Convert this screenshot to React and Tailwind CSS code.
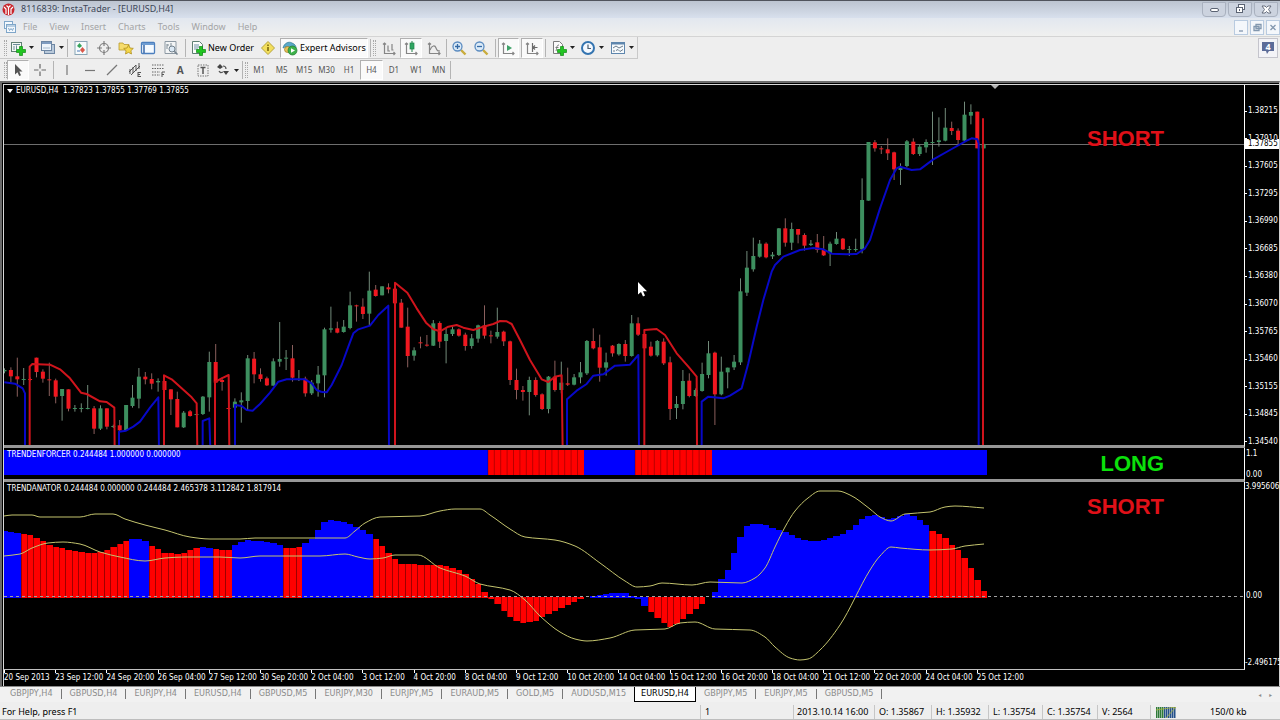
import React, { useState } from "react";

const UP = "#3d8f5f";
const DOWN = "#f01820";
const STEP = 6.4;

// Candles: [up, bodyTop, bodyBottom, high, low], three units to a pixel below base
const CANDLES = [
    {
        base: 340, start: 0, bars: [
            [1, 90, 94, 85, 100], [0, 90, 109, 82, 128], [0, 109, 118, 53, 170], [1, 117, 120, 84, 135], [0, 117, 120, 112, 124],
            [0, 53, 96, 53, 112], [0, 95, 116, 88, 128], [0, 118, 121, 68, 168], [0, 121, 170, 116, 190], [1, 147, 168, 147, 242],
            [0, 148, 206, 148, 214], [1, 204, 207, 195, 215], [1, 204, 207, 190, 217], [1, 204, 207, 135, 208], [0, 205, 266, 198, 282],
            [1, 205, 266, 196, 270], [0, 205, 260, 205, 268], [1, 258, 261, 254, 264], [0, 256, 271, 240, 275], [1, 195, 270, 195, 270],
            [1, 173, 198, 135, 203], [1, 110, 176, 84, 205], [0, 110, 118, 96, 133], [0, 117, 131, 100, 148], [1, 123, 127, 115, 155],
            [0, 123, 150, 123, 150], [0, 148, 178, 148, 225], [0, 177, 262, 155, 262], [1, 218, 262, 213, 264], [0, 214, 228, 210, 230],
            [1, 222, 225, 218, 230], [1, 170, 222, 168, 225], [1, 66, 172, 35, 215], [0, 66, 128, 12, 128], [0, 120, 126, 112, 152],
            [0, 204, 207, 200, 208], [1, 185, 203, 175, 203], [1, 181, 187, 157, 248], [1, 55, 183, 45, 210], [0, 56, 103, 36, 130],
            [0, 103, 117, 85, 125], [0, 115, 136, 110, 138], [1, 64, 137, 55, 137], [1, 57, 65, -54, 80], [1, 53, 56, 30, 90],
            [0, 55, 113, 15, 125], [1, 117, 120, 90, 123], [0, 116, 160, 110, 170], [1, 128, 160, 120, 165], [1, 104, 130, 78, 170],
        ],
    },
    {
        base: 260, start: 50, bars: [
            [1, 208, 346, 203, 412], [1, 205, 209, 140, 218], [0, 205, 218, 185, 220], [1, 200, 216, 180, 218], [1, 136, 204, 95, 208],
            [0, 136, 139, 134, 185], [0, 140, 162, 115, 177], [1, 92, 161, 35, 195], [0, 89, 108, 75, 110], [1, 79, 106, 79, 106],
            [0, 82, 88, 70, 100], [0, 86, 130, 86, 130], [0, 128, 203, 117, 203], [0, 200, 288, 143, 322], [1, 271, 287, 262, 302],
            [0, 247, 250, 230, 265], [0, 254, 257, 225, 260], [1, 190, 257, 180, 258], [0, 189, 245, 184, 264], [1, 222, 243, 205, 310],
            [1, 208, 222, 200, 228], [0, 208, 227, 205, 230], [0, 224, 258, 218, 272], [1, 235, 258, 222, 266], [1, 196, 236, 194, 248],
            [0, 196, 227, 136, 236], [0, 226, 229, 212, 250], [1, 216, 230, 143, 236], [0, 215, 244, 212, 258], [0, 244, 360, 242, 375],
            [0, 360, 390, 326, 418], [0, 390, 396, 378, 422], [1, 360, 396, 350, 466], [0, 360, 405, 352, 410], [0, 403, 447, 400, 450],
            [1, 350, 447, 348, 460], [0, 350, 390, 302, 395], [1, 368, 390, 305, 400], [0, 370, 374, 323, 378], [1, 352, 374, 342, 376],
            [1, 337, 352, 306, 370], [1, 243, 340, 240, 345], [0, 243, 265, 205, 268], [0, 262, 323, 224, 365], [1, 307, 323, 278, 347],
            [0, 257, 280, 255, 290], [1, 252, 283, 250, 287], [0, 252, 288, 240, 305], [1, 190, 288, 165, 290], [0, 190, 224, 172, 228],
            [0, 222, 265, 222, 265],
        ],
    },
    {
        base: 210, start: 101, bars: [
            [0, 410, 437, 395, 440], [1, 393, 436, 390, 440], [0, 395, 460, 385, 465], [0, 457, 597, 440, 630], [1, 582, 594, 558, 627],
            [1, 513, 582, 480, 598], [0, 512, 558, 490, 562], [1, 540, 558, 535, 560], [1, 492, 543, 458, 545], [1, 430, 495, 393, 505],
            [0, 428, 553, 425, 645], [1, 485, 553, 440, 556], [1, 473, 487, 473, 535], [1, 455, 472, 435, 480], [1, 244, 457, 205, 465],
            [1, 173, 248, 123, 258], [1, 138, 178, 83, 185], [1, 101, 140, 90, 143], [0, 101, 142, 97, 145], [1, 134, 139, 126, 147],
            [1, 55, 135, 54, 138], [0, 55, 98, 25, 110], [1, 57, 98, 38, 120], [0, 57, 74, 57, 100], [0, 75, 107, 70, 122],
            [1, 101, 105, 90, 108], [0, 97, 120, 72, 128], [0, 120, 136, 78, 138], [1, 101, 130, 95, 168], [1, 86, 102, 66, 104],
            [0, 86, 118, 84, 120], [1, 117, 120, 108, 138], [1, 117, 120, 86, 125],
        ],
    },
    {
        base: 80, start: 134, bars: [
            [1, 360, 508, 295, 520], [1, 186, 362, 186, 362], [0, 187, 205, 180, 215], [0, 205, 208, 198, 222], [0, 208, 220, 175, 240],
            [0, 217, 268, 215, 300], [1, 262, 270, 250, 315], [1, 184, 258, 180, 262], [0, 185, 222, 175, 225], [1, 200, 222, 195, 228],
            [1, 186, 202, 178, 218], [1, 186, 189, 95, 255], [1, 181, 186, 112, 200], [1, 143, 182, 84, 184], [0, 144, 153, 125, 165],
            [0, 152, 180, 145, 192], [1, 104, 182, 65, 184], [1, 96, 107, 73, 133], [0, 95, 205, 95, 205], [1, 193, 205, 190, 207],
        ],
    },
];

// Trend stop lines, same units, each group with its own origin
const STOPS = [
    {
        x: 0, y: 340, lines: [
            ["blue", "13,127 45,131 68,145 75,160 75,330"],
            ["red", "89,330 89,80 97,72 150,74 180,88 210,115 243,158 260,162 300,184 320,186 343,203 344,330"],
            ["blue", "357,330 357,275 378,272 400,260 420,245 450,203 475,172 477,330"],
            ["red", "492,330 492,106 515,118 545,145 575,172 590,190 592,330"],
            ["blue", "608,330 608,243 628,235 631,330"],
            ["red", "645,330 645,126 665,115 686,105 688,330"],
            ["blue", "705,330 705,195 725,198 740,210 758,212 780,192 810,158 835,125 860,118 915,118 935,130 950,150 965,156"],
        ],
    },
    {
        x: 320, y: 260, lines: [
            ["blue", "4,396 20,397 35,375 65,315 85,260 100,220 115,208 150,197 175,165 205,137 207,570"],
            ["red", "225,570 225,68 262,98 290,145 318,188 340,208 360,214 385,200 410,195 430,203 460,210 490,200 520,192 540,183 560,184 575,192 600,240 630,300 665,358 685,366 705,350 725,346 728,570"],
            ["blue", "741,570 741,418 770,392 800,372 820,347 850,343 885,317 930,314 955,285 957,570"],
        ],
    },
    {
        x: 630, y: 210, lines: [
            ["red", "43,720 43,360 80,357 105,375 140,430 175,470 200,500 201,720"],
            ["blue", "215,720 215,575 235,560 280,565 300,557 335,535 355,460 380,350 400,270 425,185 435,165 460,140 510,120 550,114 580,118 605,131 650,133 675,132"],
        ],
    },
    {
        x: 840, y: 80, lines: [
            ["blue", "40,522 50,522 75,505 90,480 120,385 150,300 170,265 180,260 215,270 240,268 280,238 330,210 380,182 395,175 412,178 416,190 416,1110"],
            ["red", "429,115 429,1110"],
        ],
    },
];

// Outline of the oscillator histogram
const OSC = [
    [4, 531], [20, 533], [30, 535], [37, 538], [50, 545], [60, 548], [80, 552], [95, 553], [110, 549], [127, 541], [135, 538], [145, 541],
    [150, 545], [165, 553], [180, 554], [195, 548], [203, 547], [215, 549], [228, 550], [235, 545], [245, 540], [262, 541], [275, 543],
    [285, 548], [295, 548], [302, 546], [315, 536], [322, 523], [330, 520], [345, 522], [357, 527], [372, 535], [385, 549], [400, 564],
    [440, 565], [455, 568], [465, 574], [475, 581], [483, 590], [488, 598], [493, 601], [500, 608], [507, 616], [515, 622], [525, 624],
    [535, 622], [550, 614], [565, 608], [575, 602], [585, 598], [600, 595], [612, 593], [625, 593], [635, 597], [642, 604], [648, 611],
    [655, 617], [663, 623], [671, 629], [680, 622], [690, 615], [700, 607], [706, 600], [712, 596], [718, 588], [723, 575], [730, 567],
    [735, 550], [740, 538], [745, 527], [755, 523], [765, 525], [775, 529], [790, 534], [800, 539], [815, 542], [830, 538], [845, 533],
    [855, 526], [865, 516], [875, 515], [890, 520], [905, 514], [915, 516], [925, 524], [932, 531], [943, 536], [952, 545], [960, 552],
    [967, 561], [973, 572], [979, 583], [984, 592],
];
const OSC_RED = [[21, 130], [149, 200], [213, 232], [283, 302], [373, 584], [648, 706], [930, 990]];
const ENFORCER_RED = [[488, 584], [635, 712]];

const UPPER_BAND = "4,516 12,515 32,515 40,517 80,517 95,514 113,514 125,519 145,525 165,530 190,537 210,539 240,539 255,538 345,538 355,531 365,523 380,517 420,516 440,511 455,509 480,509 490,515 510,529 525,537 555,540 575,546 600,563 625,581 637,587 650,586 662,583 692,585 710,582 742,583 755,578 765,568 775,547 785,527 795,511 808,498 820,491 838,491 850,495 870,509 880,517 891,521 905,514 930,512 945,507 955,506 984,508";
const LOWER_BAND = "4,556 20,554 32,548 48,543 63,542 80,544 100,552 120,557 145,561 165,558 185,557 220,557 240,558 260,556 320,556 345,554 358,557 370,559 383,558 395,555 418,555 440,568 465,576 480,584 510,590 525,600 540,616 560,632 575,639 587,641 610,638 635,630 665,629 680,623 695,622 715,629 750,630 765,637 775,647 790,658 800,660 808,659 820,650 840,625 870,570 880,556 891,547 900,548 930,550 952,549 965,546 984,544";

const PRICES = ["1.38215", "1.37910", "1.37605", "1.37295", "1.36990", "1.36685", "1.36380", "1.36070", "1.35765", "1.35460", "1.35155", "1.34845", "1.34540"];
const DATES = [
    "20 Sep 2013", "23 Sep 12:00", "24 Sep 20:00", "26 Sep 04:00", "27 Sep 12:00", "30 Sep 20:00", "2 Oct 04:00", "3 Oct 12:00", "4 Oct 20:00", "8 Oct 04:00",
    "9 Oct 12:00", "10 Oct 20:00", "14 Oct 04:00", "15 Oct 12:00", "16 Oct 20:00", "18 Oct 04:00", "21 Oct 12:00", "22 Oct 20:00", "24 Oct 04:00", "25 Oct 12:00",
];
const TABS = ["GBPJPY,H4", "GBPUSD,H4", "EURJPY,H4", "EURUSD,H4", "GBPUSD,M5", "EURJPY,M30", "EURJPY,M5", "EURAUD,M5", "GOLD,M5", "AUDUSD,M15", "EURUSD,H4", "GBPJPY,M5", "EURJPY,M5", "GBPUSD,M5"];
const MENUS = ["File", "View", "Insert", "Charts", "Tools", "Window", "Help"];
const PERIODS = ["M1", "M5", "M15", "M30", "H1", "H4", "D1", "W1", "MN"];

const oscAt = (x) => {
    const k = OSC.findIndex((p) => p[0] >= x);
    if (k < 0) return OSC[OSC.length - 1][1];
    if (k === 0) return OSC[0][1];
    const [x0, y0] = OSC[k - 1];
    const [x1, y1] = OSC[k];
    return Math.round(y0 + ((y1 - y0) * (x - x0)) / (x1 - x0));
};
const inRanges = (ranges, x) => ranges.some(([a, b]) => x > a && x < b);
const barXs = Array.from({ length: 154 }, (_, i) => 4.5 + STEP * i);

// Curve through all the points, flat where the direction turns
const smooth = (list) => {
    const p = list.split(" ").map((s) => s.split(",").map(Number));
    const slope = (i) => (p[i + 1][1] - p[i][1]) / (p[i + 1][0] - p[i][0]);
    const tangents = p.map((_, i) => {
        if (i === 0) return slope(0);
        if (i === p.length - 1) return slope(i - 1);
        const a = slope(i - 1);
        const b = slope(i);
        return a * b <= 0 ? 0 : (2 * a * b) / (a + b);
    });
    return p.slice(1).reduce((d, [x, y], i) => {
        const [x0, y0] = p[i];
        const h = (x - x0) / 3;
        return `${d} C${x0 + h},${y0 + h * tangents[i]} ${x - h},${y - h * tangents[i + 1]} ${x},${y}`;
    }, `M${p[0][0]},${p[0][1]}`);
};

/* ---------- Icons ---------- */

const Icon = ({ children, size = 16 }) => (
    <svg width={size} height={size} viewBox="0 0 16 16" fill="none" className="shrink-0" aria-hidden="true">
        {children}
    </svg>
);

const Plus = () => <path d="M9.5 6.5h3v3h3v3h-3v3h-3v-3h-3v-3h3z" fill="#22c522" stroke="#0f8a12" strokeWidth=".7" />;

const NewChartIcon = () => (
    <Icon>
        <rect x="1.5" y="2.5" width="10" height="9" fill="#f4f8f4" stroke="#5f7f73" />
        <path d="M3 4.5h7M4 6v4M6.5 5.5v4" stroke="#6c8c9a" />
        <Plus />
    </Icon>
);
const ProfilesIcon = () => (
    <Icon>
        <rect x="4.500" y="4.500" width="10" height="9" fill="#b9c9da" stroke="#6d86a3" />
        <rect x="1.500" y="1.500" width="10" height="9" fill="#eef4fa" stroke="#6d86a3" />
        <path d="M2 3h9" stroke="#7f9cc0" strokeWidth="2" />
        <path d="M3 8h7" stroke="#a8bccf" />
    </Icon>
);
const MarketIcon = () => (
    <Icon>
        <rect x="2" y="1.500" width="12" height="13" fill="#f7fbfc" stroke="#8aa5b5" />
        <path d="M4 6l2.500-3L9 6l-2.500 2z" fill="#35a35a" />
        <path d="M7 10l2.500-3 2.500 3-2.500 3z" fill="#d9584a" />
        <path d="M4 11h3" stroke="#4b78b8" />
    </Icon>
);
const CrosshairIcon = () => (
    <Icon>
        <circle cx="8" cy="8" r="4.500" stroke="#7d7d7d" strokeWidth="1.200" />
        <path d="M8 1v5M8 10v5M1 8h5M10 8h5" stroke="#7d7d7d" strokeWidth="1.200" />
    </Icon>
);
const NavigatorIcon = () => (
    <Icon>
        <path d="M1 3h4l1 1.500h5V10H1z" fill="#f6dc6c" stroke="#b99a2c" strokeWidth=".8" />
        <path d="M10.500 5l1.500 3 3.300.4-2.400 2.300.6 3.300-3-1.600-3 1.600.6-3.300-2.400-2.300 3.300-.4z" fill="#f5d84c" stroke="#b08f1d" strokeWidth=".8" />
    </Icon>
);
const TerminalIcon = () => (
    <Icon>
        <rect x="1.500" y="2.500" width="13" height="11" rx="1" fill="#f5faff" stroke="#4c7fbe" strokeWidth="1.300" />
        <path d="M2 4h12" stroke="#6d9cd2" strokeWidth="2" />
        <path d="M4 5v8" stroke="#3a68a8" strokeWidth="1.500" />
    </Icon>
);
const TesterIcon = () => (
    <Icon>
        <path d="M2 1.500h11v12H2z" fill="#f3f5f6" stroke="#8d99a3" />
        <path d="M4 4v5M4 5h2M8 3v5M8 7h2" stroke="#7f8c96" />
        <circle cx="9" cy="9" r="3" fill="#dbe9f5" stroke="#74828e" />
        <path d="M11.200 11.200l3.300 3.300" stroke="#74828e" strokeWidth="1.600" />
    </Icon>
);
const OrderIcon = () => (
    <Icon>
        <path d="M2.500 1.500h7l3 3v9h-10z" fill="#fbfdfb" stroke="#5e7f73" />
        <path d="M4 5h5M4 7h6M4 9h4" stroke="#6f8fa5" />
        <Plus />
    </Icon>
);
const MetaIcon = () => (
    <Icon>
        <path d="M8 1.500L14.500 8 8 14.500 1.500 8z" fill="#f2de5c" stroke="#b8a53c" />
        <path d="M8 4.500v1.500M8 7v4" stroke="#6d5a00" strokeWidth="1.400" />
    </Icon>
);
const ExpertIcon = () => (
    <Icon>
        <path d="M1 8c1-5 6-7 9-5 3 1 4 3 4 5-4-2-9-2-13 0z" fill="#5aa9c9" stroke="#2f7890" strokeWidth=".7" />
        <circle cx="5.500" cy="9.500" r="3" fill="#e7c15a" stroke="#9d7a21" strokeWidth=".7" />
        <circle cx="10.500" cy="10.500" r="4.500" fill="#3db14b" stroke="#1f7a2c" strokeWidth=".7" />
        <path d="M9 8.200l4 2.300-4 2.300z" fill="#fff" />
    </Icon>
);
const Axes = () => <path d="M3.500 3v10.500H14M2 4.500L3.500 3 5 4.500M12.500 12l1.500 1.500-1.500 1.500" stroke="#858585" strokeWidth="1.200" />;
const BarsIcon = () => <Icon><Axes /><path d="M7 5.500v6M7 11h2M11 4v6.500M11 10h1.500" stroke="#858585" strokeWidth="1.200" /></Icon>;
const CandlesIcon = () => <Icon><Axes /><path d="M9 1v11" stroke="#22834a" /><rect x="7" y="3" width="4" height="6" fill="#2fa561" stroke="#22834a" strokeWidth=".7" /></Icon>;
const LineIcon = () => <Icon><Axes /><path d="M4 10c2-5 5-5 6-2s2 3 4 3" stroke="#858585" strokeWidth="1.200" /></Icon>;
const ZoomIcon = ({ plus }) => (
    <Icon>
        <path d="M10 10l4.500 4.500" stroke="#c9ac3c" strokeWidth="2.400" />
        <circle cx="6.500" cy="6.500" r="4.500" fill="#dcebf8" stroke="#5c8cc0" strokeWidth="1.300" />
        <path d={plus ? "M4 6.500h5M6.500 4v5" : "M4 6.500h5"} stroke="#356aa5" strokeWidth="1.300" />
    </Icon>
);
const ScrollIcon = () => <Icon><Axes /><path d="M7 5l5 3-5 3z" fill="#3fa268" /></Icon>;
const ShiftIcon = () => <Icon><Axes /><path d="M8.500 3v9M13.500 7.500h-4M11 5.500l-2 2 2 2" stroke="#6b6b6b" strokeWidth="1.200" /></Icon>;
const IndicatorIcon = () => (
    <Icon>
        <path d="M2.500 1.500h6l3 3v9h-9z" fill="#fafafa" stroke="#7b7b7b" />
        <path d="M5 11c1-2 0-6 3-6M4.500 7.500h3" stroke="#7b7b7b" />
        <Plus />
    </Icon>
);
const ClockIcon = () => (
    <Icon>
        <circle cx="8" cy="8" r="6" fill="#f4f9ff" stroke="#3474b0" strokeWidth="2" />
        <path d="M8 4.500V8.500h3" stroke="#4b5c6d" strokeWidth="1.200" />
    </Icon>
);
const TemplateIcon = () => (
    <Icon>
        <rect x="1.500" y="2.500" width="13" height="11" fill="#f6fafd" stroke="#5e86ad" />
        <path d="M2 3.500h12" stroke="#5e86ad" strokeWidth="2" />
        <path d="M3 8l3-2 3 2 4-2M3 11h2M6 10.500l2-1 2 2 3-2" stroke="#6c7d8c" />
    </Icon>
);
const Arrow = () => <svg width="5" height="3" viewBox="0 0 5 3" className="shrink-0" aria-hidden="true"><path d="M0 0h5L2.500 3z" fill="#222" /></svg>;

const CursorIcon = () => <Icon><path d="M5 2v10.500l2.500-2.300 1.700 3.800 1.800-.8-1.700-3.700H12.500z" fill="#555" /></Icon>;
const CrossIcon = () => <Icon><path d="M8 2v4.500M8 9.500V14M2 8h4.500M9.500 8H14" stroke="#666" strokeWidth="1.200" /></Icon>;
const VLineIcon = () => <Icon><path d="M8 3v10" stroke="#777" strokeWidth="1.200" /></Icon>;
const HLineIcon = () => <Icon><path d="M3 8.500h10" stroke="#777" strokeWidth="1.200" /></Icon>;
const TrendIcon = () => <Icon><path d="M3 13L13 3" stroke="#777" strokeWidth="1.200" /></Icon>;
const ChannelIcon = () => <Icon><path d="M2 10L9 3M4 13l9-9M3 7v5M6 5v6M9 3v6M12 1v6" stroke="#555" /><path d="M11 10.500h3M11 12.500h2M11 14.500h3M11 10v5" stroke="#555" /></Icon>;
const FiboIcon = () => <Icon><path d="M2 3h12M2 6.500h12M2 10h8M2 13h8" stroke="#666" strokeDasharray="1.500 1" /><path d="M12 15v-5h3M12 12.500h2" stroke="#555" /></Icon>;
const TextBoxIcon = () => <Icon><rect x="3" y="3" width="10" height="11" stroke="#777" strokeDasharray="1.500 1" /><path d="M5.500 5.500h5M8 5.500v6.500" stroke="#555" strokeWidth="1.500" /></Icon>;
const ArrowsIcon = () => <Icon><path d="M2 5l3-3 3 3-3 2zM8 9h6l-3 4z" fill="#444" /><path d="M4 9c1 2 2 2 4 1M8 4c2 0 3 1 3 3" stroke="#555" strokeWidth="1.200" /></Icon>;

/* ---------- Toolbar parts ---------- */

const Grip = () => <span className="h-4 w-[3px] shrink-0 border-x border-dotted border-[#a8a8a8]" />;
const Sep = () => <span className="h-[18px] w-px shrink-0 bg-[#b4b4b4]" />;

const ToolButton = ({ label, pressed, drop, children }) => (
    <button
        type="button"
        aria-label={label}
        aria-pressed={pressed}
        className={`flex h-5 items-center justify-center gap-[3px] ${pressed ? "border border-[#b0b0b0] border-r-white border-b-white bg-[#fafafa]" : ""}`}
    >
        {children}
        {drop && <Arrow />}
    </button>
);

const TitleBar = () => (
    <header className="flex h-[18px] items-center border-t border-[#50545c] bg-linear-to-b from-[#bcc4d0] to-[#d8e0ed] pr-[2px] pb-px pl-[2px]">
        <svg width="13" height="13" viewBox="0 0 13 13" className="mr-[6px]" aria-hidden="true">
            <circle cx="6.500" cy="6.500" r="6" fill="#c9242b" />
            <path d="M4 11V6L2 4M6.500 12V4.500M9 11V6l2-2M4.500 2.500l2 2 2-2" stroke="#fff" strokeWidth="1.200" fill="none" />
        </svg>
        <h1 className="flex-1 text-[9px] text-[#3c4656]">8116839: InstaTrader - [EURUSD,H4]</h1>
        <div className="flex gap-[2px]">
            <button type="button" aria-label="Minimize" className="flex h-[15px] w-6 items-center justify-center rounded-b-sm border border-[#a9b1bf] bg-[#ccd3df]">
                <span className="mt-px h-[4px] w-[9px] rounded-xs border border-[#5b6373] bg-white" />
            </button>
            <button type="button" aria-label="Restore" className="flex h-[15px] w-6 items-center justify-center rounded-b-sm border border-[#a9b1bf] bg-[#ccd3df]">
                <svg width="11" height="10" viewBox="0 0 11 10" fill="#fff" stroke="#5b6373" aria-hidden="true">
                    <rect x="3.500" y=".5" width="6" height="5" />
                    <rect x="1.500" y="3.500" width="6" height="5" />
                    <path d="M4.500 5v2" />
                </svg>
            </button>
            <button type="button" aria-label="Close" className="flex h-[15px] w-6 items-center justify-center rounded-b-sm border border-[#a9b1bf] bg-[#ccd3df]">
                <svg width="11" height="9" viewBox="0 0 11 9" fill="#fff" stroke="#5b6373" strokeWidth=".9" aria-hidden="true">
                    <path d="M1 1h3l1.500 1.500L7 1h3L7.500 4.500 10 8H7L5.500 6.500 4 8H1l2.500-3.500z" />
                </svg>
            </button>
        </div>
    </header>
);

const MenuBar = () => (
    <nav className="flex h-[18px] items-center bg-linear-to-b from-[#e2e7ef] to-[#f0f0ef] pl-[4px] text-[9px] text-[#a3a4a6]">
        <svg width="12" height="12" viewBox="0 0 12 12" fill="#f4f9fd" stroke="#7fa6c9" className="mr-[7px]" aria-hidden="true">
            <rect x=".5" y=".5" width="8" height="7" />
            <rect x="2.500" y="3.500" width="9" height="8" />
            <path d="M3 5h8M4.500 7l1 2.500 1.500-2 1.500 2 1-2.500" />
        </svg>
        <div className="flex flex-1 gap-3">
            {MENUS.map((m) => (
                <button key={m} type="button">{m}</button>
            ))}
        </div>
        <div className="flex gap-[2px]">
            {["M4 10h4", "M5 3.500h5v4H5zM3 5.500h5v4H3z", "M3.500 4l5 5M8.500 4l-5 5"].map((d, i) => (
                <button key={d} type="button" aria-label={["Minimize chart", "Restore chart", "Close chart"][i]} className="flex h-[15px] w-[14px] items-center justify-center border border-[#b9cbe0] bg-[#f4f7fb]">
                    <svg width="12" height="13" viewBox="0 0 12 13" fill="none" stroke="#8297ae" strokeWidth="1.300" aria-hidden="true"><path d={d} /></svg>
                </button>
            ))}
        </div>
    </nav>
);

const MainToolbar = () => (
    <div className="flex h-[23px] justify-between border-t border-[#d4d4d4] pr-[2px]">
        <div className="flex items-center border-r border-b border-[#c9c9c9] pl-1">
            <Grip />
            <div className="grid w-[60px] grid-cols-2">
                <ToolButton label="New chart" drop><NewChartIcon /></ToolButton>
                <ToolButton label="Profiles" drop><ProfilesIcon /></ToolButton>
            </div>
            <Sep />
            <div className="ml-[2px] grid w-[112px] grid-cols-5">
                <ToolButton label="Market watch"><MarketIcon /></ToolButton>
                <ToolButton label="Data window"><CrosshairIcon /></ToolButton>
                <ToolButton label="Navigator"><NavigatorIcon /></ToolButton>
                <ToolButton label="Terminal"><TerminalIcon /></ToolButton>
                <ToolButton label="Strategy tester"><TesterIcon /></ToolButton>
            </div>
            <span className="mx-[3px] flex"><Sep /></span>
            <button type="button" className="flex h-5 items-center gap-[2px] pl-px text-[9px] text-black">
                <OrderIcon />
                <span>New Order</span>
            </button>
            <div className="ml-[4px] grid w-[20px]">
                <ToolButton label="MetaEditor"><MetaIcon /></ToolButton>
            </div>
            <button type="button" aria-pressed="true" className="ml-[2px] flex h-5 items-center gap-[2px] border border-[#b0b0b0] border-r-white border-b-white bg-[#fafafa] pr-px pl-px text-[9px] text-black">
                <ExpertIcon />
                <span>Expert Advisors</span>
            </button>
            <span className="mx-[2px] flex"><Sep /></span>
            <Grip />
            <div className="ml-[2px] grid w-[67px] grid-cols-3">
                <ToolButton label="Bar chart"><BarsIcon /></ToolButton>
                <ToolButton label="Candlesticks" pressed><CandlesIcon /></ToolButton>
                <ToolButton label="Line chart"><LineIcon /></ToolButton>
            </div>
            <span className="mx-px flex"><Sep /></span>
            <div className="grid w-[45px] grid-cols-2">
                <ToolButton label="Zoom in"><ZoomIcon plus /></ToolButton>
                <ToolButton label="Zoom out"><ZoomIcon /></ToolButton>
            </div>
            <span className="mx-[2px] flex"><Sep /></span>
            <div className="grid w-[45px] grid-cols-2 gap-[2px]">
                <ToolButton label="Auto scroll" pressed><ScrollIcon /></ToolButton>
                <ToolButton label="Chart shift" pressed><ShiftIcon /></ToolButton>
            </div>
            <span className="mx-[2px] flex"><Sep /></span>
            <div className="grid w-[89px] grid-cols-3">
                <ToolButton label="Indicators" drop><IndicatorIcon /></ToolButton>
                <ToolButton label="Periods" drop><ClockIcon /></ToolButton>
                <ToolButton label="Templates" drop><TemplateIcon /></ToolButton>
            </div>
        </div>
        <button type="button" className="mt-px flex h-5 w-5 items-center justify-center border border-[#c4c4cc] bg-[#f3f3f7]" aria-label="4 messages">
            <svg width="14" height="14" viewBox="0 0 14 14" aria-hidden="true">
                <path d="M1 1h12v9H8l-2 3-1-3H1z" fill="#5b6b98" />
                <text x="7" y="9" textAnchor="middle" fontSize="9" fontWeight="bold" fill="#fff">4</text>
            </svg>
        </button>
    </div>
);

const DrawToolbar = ({ period, setPeriod }) => (
    <div className="flex h-[22px] items-center pl-1 text-[#555]">
        <Grip />
        <div className="mr-[2px] grid w-[44px] grid-cols-2">
            <ToolButton label="Cursor" pressed><CursorIcon /></ToolButton>
            <ToolButton label="Crosshair"><CrossIcon /></ToolButton>
        </div>
        <Sep />
        <div className="ml-[2px] grid w-[158px] grid-cols-7">
            <ToolButton label="Vertical line"><VLineIcon /></ToolButton>
            <ToolButton label="Horizontal line"><HLineIcon /></ToolButton>
            <ToolButton label="Trendline"><TrendIcon /></ToolButton>
            <ToolButton label="Equidistant channel"><ChannelIcon /></ToolButton>
            <ToolButton label="Fibonacci retracement"><FiboIcon /></ToolButton>
            <ToolButton label="Text"><span className="text-[10px] font-bold">A</span></ToolButton>
            <ToolButton label="Text label"><TextBoxIcon /></ToolButton>
        </div>
        <div className="grid w-[26px]">
            <ToolButton label="Arrows" drop><ArrowsIcon /></ToolButton>
        </div>
        <span className="mx-[2px] flex"><Sep /></span>
        <Grip />
        <div className="grid w-[202px] grid-cols-9">
            {PERIODS.map((p) => (
                <button
                    key={p}
                    type="button"
                    aria-pressed={p === period}
                    onClick={() => setPeriod(p)}
                    className={`h-5 text-[8px] ${p === period ? "border border-[#b0b0b0] border-r-white border-b-white bg-[#fafafa]" : ""}`}
                >
                    {p}
                </button>
            ))}
        </div>
        <Sep />
    </div>
);

/* ---------- Chart ---------- */

const Signal = ({ children, long }) => (
    <span className={`absolute right-20 font-['Liberation_Sans',sans-serif] text-[22px] leading-6 font-bold ${long ? "top-1 text-[#0be00b]" : "text-[#e01018]"}`}>
        {children}
    </span>
);

const PricePane = () => (
    <div className="relative flex-1 overflow-hidden border-r border-b-[3px] border-r-white border-b-[#979797]">
        <svg className="block h-[360px] w-full" aria-hidden="true">
            <line x1="0" x2="100%" y1="59.500" y2="59.500" stroke="#6e6e6e" />
            <g transform="translate(-4 -85)">
                {CANDLES.map(({ base, start, bars }) =>
                    bars.map(([up, top, bottom, high, low], k) => {
                        const x = barXs[start + k];
                        const color = up ? UP : DOWN;
                        return (
                            <g key={start + k}>
                                <line x1={x} x2={x} y1={base + high / 3} y2={base + low / 3} stroke={up ? "#7f9a88" : "#9a6a68"} strokeWidth=".9" />
                                <rect x={x - 2} y={base + top / 3} width="4" height={(bottom - top) / 3} fill={color} />
                            </g>
                        );
                    })
                )}
                {STOPS.map(({ x, y, lines }) => (
                    <g key={x} transform={`translate(${x} ${y}) scale(.33333)`} fill="none" strokeWidth="6" strokeLinejoin="round">
                        {lines.map(([color, points]) => (
                            <polyline key={points} points={points} stroke={color === "red" ? "#d0141c" : "#0808c8"} />
                        ))}
                    </g>
                ))}
                <path d="M991 85h8l-4 4z" fill="#b5b5b5" />
            </g>
        </svg>
        <p className="absolute top-0 left-[3px] flex items-center gap-[3px] text-[8px] leading-3 whitespace-pre">
            <svg width="6" height="4" viewBox="0 0 6 4" aria-hidden="true"><path d="M0 0h6L3 4z" fill="#fff" /></svg>
            {"EURUSD,H4  1.37823 1.37855 1.37769 1.37855"}
        </p>
        <div className="absolute inset-x-0 top-[42px]"><Signal>SHORT</Signal></div>
        {/* Mouse pointer */}
        <svg width="10" height="16" viewBox="0 0 10 16" className="absolute top-[197px] left-[634px]" aria-hidden="true">
            <path d="M0 0v12.500l3-2.600 2 4.600 2-.9-2-4.400h4z" fill="#fff" />
        </svg>
    </div>
);

const EnforcerPane = () => (
    <div className="relative flex-1 overflow-hidden border-r border-b-[3px] border-r-white border-b-[#979797]">
        <svg className="block h-[31px] w-full" aria-hidden="true">
            <g transform="translate(-4 -448)">
                <rect x="4" y="450" width="983" height="25" fill="#00f" />
                {ENFORCER_RED.map(([a, b]) => (
                    <rect key={a} x={a} y="450" width={b - a} height="25" fill="#f00" />
                ))}
                {barXs.filter((x) => inRanges(ENFORCER_RED, x)).map((x) => (
                    <line key={x} x1={x - 3} x2={x - 3} y1="450" y2="475" stroke="#000" strokeOpacity=".4" strokeWidth=".7" />
                ))}
            </g>
        </svg>
        <p className="absolute top-px left-[3px] text-[8px] leading-3">TRENDENFORCER 0.244484 1.000000 0.000000</p>
        <Signal long>LONG</Signal>
    </div>
);

const OscillatorPane = () => (
    <div className="relative flex-1 overflow-hidden border-r border-b border-r-white border-b-[#c0c0c0]">
        <svg className="block h-[187px] w-full" aria-hidden="true">
            <g transform="translate(-4 -482)">
                {barXs.map((x) => {
                    const y = oscAt(x);
                    const red = inRanges(OSC_RED, x);
                    const left = Math.round(x - 3.2);
                    return (
                        <g key={x}>
                            <rect x={left} y={Math.min(y, 597)} width={Math.round(x + 3.2) - left} height={Math.abs(598 - y)} fill={red ? "#f00" : "#00f"} />
                            {red && <line x1={left + 0.5} x2={left + 0.5} y1={Math.min(y, 597)} y2={Math.max(y, 598)} stroke="#000" strokeOpacity=".38" strokeWidth="1" />}
                        </g>
                    );
                })}
                <g fill="none" stroke="#c4c46e">
                    <path d={smooth(UPPER_BAND)} />
                    <path d={smooth(LOWER_BAND)} />
                </g>
            </g>
            <line x1="0" x2="100%" y1="114.500" y2="114.500" stroke="#a0a0a0" strokeDasharray="3 3" />
        </svg>
        <p className="absolute top-px left-[3px] text-[8px] leading-3">TRENDANATOR 0.244484 0.000000 0.244484 2.465378 3.112842 1.817914</p>
        <div className="absolute inset-x-0 top-[13px]"><Signal>SHORT</Signal></div>
    </div>
);

const Chart = () => (
    <section className="border-t-2 border-r border-l-2 border-[#6a6a6a] border-r-[#d0d0d0] bg-black pt-px pl-px font-['DejaVu_Sans_Condensed','DejaVu_Sans',sans-serif] text-white">
        <div className="border-t border-l border-[#d8d8d8]">
            <div className="flex">
                <PricePane />
                <div className="relative flex w-[34px] flex-col justify-between pt-[21px] pb-px text-[8px] leading-[10px]">
                    {PRICES.map((p) => (
                        <span key={p} className="flex items-center gap-px before:h-px before:w-[2px] before:bg-white">{p}</span>
                    ))}
                    <span className="absolute top-[54px] right-0 left-0 bg-white pl-[3px] text-black">1.37855</span>
                </div>
            </div>
            <div className="flex">
                <EnforcerPane />
                <div className="flex w-[34px] flex-col justify-between pt-px pb-[2px] pl-px text-[8px] leading-[10px]">
                    <span>1.1</span>
                    <span>0.00</span>
                </div>
            </div>
            <div className="flex">
                <OscillatorPane />
                <div className="flex w-[34px] flex-col pb-[2px] text-[8px] leading-[10px]">
                    <span>3.995606</span>
                    <span className="my-auto pt-[42px] pl-px">0.00</span>
                    <span>-2.496175</span>
                </div>
            </div>
            <div className="grid h-4 w-[1024px] grid-cols-20">
                {DATES.map((d) => (
                    <div key={d} className="flex flex-col text-[8px] leading-[10px] whitespace-nowrap before:h-[3px] before:w-px before:bg-white">
                        {d}
                    </div>
                ))}
            </div>
        </div>
    </section>
);

const ChartTabs = ({ active, setActive }) => (
    <div className="flex h-[16px] items-stretch border-t border-[#8a8a8a] bg-[#f1f1f1] pl-[2px] font-['DejaVu_Sans_Condensed',sans-serif] text-[9px] leading-3 text-[#8b8b8b]">
        {TABS.map((t, i) => (
            <button
                key={i}
                type="button"
                onClick={() => setActive(i)}
                className={`pb-[3px] ${i === active ? "border-x border-b border-black bg-white px-[6px] text-black" : "px-2"}`}
            >
                <span>{t}</span>
                {i !== active && i + 1 !== active && <span className="relative left-2 inline-block h-[10px] w-px bg-[#777] align-middle" />}
            </button>
        ))}
        <span className="ml-auto flex items-center gap-2 pr-2 text-[6px]">
            <span>◂</span>
            <span>▸</span>
        </span>
    </div>
);

const StatusBar = () => (
    <footer className="flex h-[18px] items-center border-b border-[#bdbdbd] bg-[#eeeeee] pt-[3px] text-[9px] leading-[14px] text-black">
        <span className="flex-1 pl-[2px]">For Help, press F1</span>
        <span className="w-[93px] border-l border-[#c6c6c6] pl-1">1</span>
        <span className="w-[81px] border-l border-[#c6c6c6] pl-[3px]">2013.10.14 16:00</span>
        <span className="w-[57px] border-l border-[#c6c6c6] pl-1">O: 1.35867</span>
        <span className="w-[57px] border-l border-[#c6c6c6] pl-1">H: 1.35932</span>
        <span className="w-[54px] border-l border-[#c6c6c6] pl-1">L: 1.35754</span>
        <span className="w-[55px] border-l border-[#c6c6c6] pl-1">C: 1.35754</span>
        <span className="w-[53px] border-l border-[#c6c6c6] pl-1">V: 2564</span>
        <span className="flex w-[130px] items-center gap-[34px] border-l border-[#c6c6c6] pl-[5px]">
            <svg width="20" height="11" viewBox="0 0 20 11" aria-hidden="true">
                {[0, 2, 4, 6, 8, 10, 12, 14, 16, 18].map((x, i) => (
                    <rect key={x} x={x} y="0" width="1.500" height="11" fill={i < 4 ? "#2f7a3a" : "#24508a"} />
                ))}
                <path d="M0 3L20 0v0L10 11" stroke="#a8b838" strokeWidth=".8" fill="none" />
            </svg>
            <span className="whitespace-nowrap">150/0 kb</span>
        </span>
    </footer>
);

const App = () => {
    const [period, setPeriod] = useState("H4");
    const [activeTab, setActiveTab] = useState(10);

    return (
        <div className="min-h-screen overflow-hidden bg-[#eeeeee] font-['Noto_Sans',sans-serif]">
            <TitleBar />
            <MenuBar />
            <MainToolbar />
            <DrawToolbar period={period} setPeriod={setPeriod} />
            <Chart />
            <ChartTabs active={activeTab} setActive={setActiveTab} />
            <StatusBar />
        </div>
    );
};

export default App;
